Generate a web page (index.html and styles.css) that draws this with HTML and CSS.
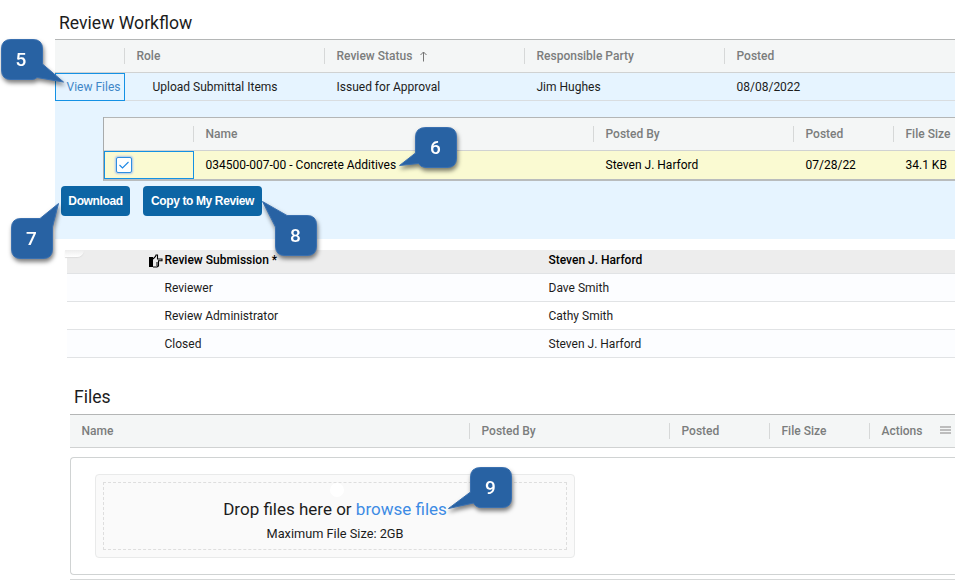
FILE: index.html
```html
<!DOCTYPE html>
<html lang="en">
<head>
<meta charset="UTF-8">
<meta name="viewport" content="width=device-width, initial-scale=1.0">
<title>Review Workflow</title>
<link rel="stylesheet" href="styles.css">
</head>
<body>
<section class="workflow">
  <h2>Review Workflow</h2>
  <div class="grid-header workflow-cols">
    <div></div>
    <div>Role</div>
    <div>Review Status
      <svg class="sort" width="9" height="11" viewBox="0 0 9 11"><path d="M4.5 10.5V1M1.500 4L4.500 1L7.500 4" fill="none" stroke="#757575"/></svg>
    </div>
    <div>Responsible Party</div>
    <div>Posted</div>
  </div>
  <div class="grid-row workflow-cols expanded">
    <div class="focused"><a href="#">View Files</a></div>
    <div class="role">Upload Submittal Items</div>
    <div>Issued for Approval</div>
    <div>Jim Hughes</div>
    <div>08/08/2022</div>
  </div>
  <div class="detail">
    <div class="detail-grid">
      <div class="grid-header detail-cols">
        <div></div>
        <div>Name</div>
        <div>Posted By</div>
        <div>Posted</div>
        <div>File Size</div>
      </div>
      <div class="grid-row detail-cols selected">
        <div class="focused">
          <span class="checkbox"><svg width="12" height="10" viewBox="0 0 12 10"><path d="M1.500 5L4.500 8L10.500 2" fill="none" stroke="#1e88e5" stroke-width="1.1"/></svg></span>
        </div>
        <div>034500-007-00 - Concrete Additives</div>
        <div>Steven J. Harford</div>
        <div>07/28/22</div>
        <div>34.1 KB</div>
      </div>
    </div>
    <div class="buttons">
      <button type="button">Download</button>
      <button type="button">Copy to My Review</button>
    </div>
  </div>
</section>

<section class="steps">
  <div class="step current">
    <div>
      <svg class="hand" width="14" height="14" viewBox="0 0 14 14">
        <path d="M0 3H4V13H0Z" fill="#000"/>
        <path d="M4 5L6.500 2.500L7 1H8.500V5H13V6.800H9.500V12L8 13H4M9.500 9H7M9.300 11H7" fill="none" stroke="#000" stroke-width="1.1"/>
      </svg>Review Submission *
    </div>
    <div>Steven J. Harford</div>
  </div>
  <div class="step"><div>Reviewer</div><div>Dave Smith</div></div>
  <div class="step"><div>Review Administrator</div><div>Cathy Smith</div></div>
  <div class="step"><div>Closed</div><div>Steven J. Harford</div></div>
</section>

<section class="files">
  <h2>Files</h2>
  <div class="grid-header files-cols">
    <div>Name</div>
    <div>Posted By</div>
    <div>Posted</div>
    <div>File Size</div>
    <div>Actions
      <svg class="menu" width="11" height="8" viewBox="0 0 11 8"><path d="M0 1H11M0 4H11M0 7H11" stroke="#aaa" stroke-width="1.4"/></svg>
    </div>
  </div>
  <div class="upload-panel">
    <div class="dropzone">
      <div class="dropzone-inner">
        <span class="dot"></span>
        <p class="drop-text">Drop files here or <a href="#">browse files</a></p>
        <p class="drop-size">Maximum File Size: 2GB</p>
      </div>
    </div>
  </div>
  <div class="files-end"></div>
</section>

<!-- step callouts -->
<svg class="callout callout-5" width="64" height="46" viewBox="0 0 64 46">
  <path d="M10 .5H32Q41.500 .5 41.500 10V25L62.500 43L36 38.500Q34 40.500 31 40.500H10Q.5 40.500 .5 31V10Q.5 .5 10 .5Z"/>
  <text x="20" y="26.500">5</text>
</svg>
<svg class="callout callout-6" width="60" height="42" viewBox="0 0 60 42">
  <path d="M27 .5H48Q57.500 .5 57.500 10V31Q57.500 40.500 48 40.500H27Q22 40.500 19.500 36.500L.5 38.500L16.500 26V10Q16.500 .5 27 .5Z"/>
  <text x="36.500" y="26.500">6</text>
</svg>
<svg class="callout callout-7" width="50" height="58" viewBox="0 0 50 58">
  <path d="M10 15.500H29L47.500 .5L41.500 24V46Q41.500 55.500 32 55.500H10Q.5 55.500 .5 46V25Q.5 15.500 10 15.500Z"/>
  <text x="20.500" y="42">7</text>
</svg>
<svg class="callout callout-8" width="56" height="57" viewBox="0 0 56 57">
  <path d="M.5 .5L25 14.500H45Q54.500 14.500 54.500 24V45Q54.500 54.500 45 54.500H23Q13.500 54.500 13.500 45V26Z"/>
  <text x="33.500" y="41">8</text>
</svg>
<svg class="callout callout-9" width="66" height="44" viewBox="0 0 66 44">
  <path d="M33 .5H54Q63.500 .5 63.500 10V31Q63.500 40.500 54 40.500H33Q28 40.500 25.500 36L.5 41.500L22.500 25V10Q22.500 .5 33 .5Z"/>
  <text x="42.500" y="26.500">9</text>
</svg>
</body>
</html>
```
FILE: styles.css
```css
* {
  box-sizing: border-box;
}

body {
  margin: 0;
  height: 580px;
  overflow: hidden;
  position: relative;
  font-family: Roboto, "Liberation Sans", sans-serif;
  font-size: 12px;
  color: #1c1c1c;
  background: #fff;
}

h2 {
  margin: 0;
  font-size: 17.6px;
  font-weight: 400;
  line-height: 22px;
}

a {
  color: #3f87c8;
  text-decoration: none;
}

/* Grids */
.grid-header,
.grid-row {
  display: grid;
  align-items: center;
}

.grid-header {
  height: 34px;
  border-top: 1px solid #b4b6b6;
  border-bottom: 1px solid #d0d2d2;
  background: #f4f6f6;
  color: #7b7d7d;
  font-weight: 500;
}

.grid-header > div {
  height: 16px;
  line-height: 16px;
  padding-left: 11.5px;
  border-left: 1px solid #d6d8d8;
  white-space: nowrap;
}

.grid-header > div:first-child {
  border-left: none;
}

.grid-row > div {
  padding-left: 12.5px;
  white-space: nowrap;
}

.workflow-cols {
  grid-template-columns: 69px 200px 200px 200px 1fr;
}

.detail-cols {
  grid-template-columns: 89px 400px 200px 100px 1fr;
}

.files-cols {
  grid-template-columns: 399px 200px 100px 100px 1fr;
}

.sort {
  margin-left: 4px;
  vertical-align: -2px;
}

/* Workflow */
.workflow {
  margin-left: 55px;
  padding-top: 12px;
}

.workflow h2 {
  padding: 0 0 5px 4px;
}

.expanded {
  height: 28px;
  background: #e6f4ff;
  border-bottom: 1px solid #d9dde0;
}

.grid-row .focused {
  align-self: stretch;
  display: flex;
  align-items: center;
  border: 1px solid #1491e4;
}

.expanded .focused {
  width: 70px;
  margin-bottom: -1px;
  padding-left: 10.5px;
}

.grid-row .role {
  padding-left: 28.5px;
}

.detail {
  height: 138px;
  padding-top: 16px;
  background: #e6f4ff;
}

.detail-grid {
  margin-left: 48px;
  border-left: 1px solid #a8abac;
  border-bottom: 2px solid #b9bcbd;
}

.selected {
  height: 28px;
  background: #fafad2;
  color: #000;
}

.selected .focused {
  width: 90px;
  padding-left: 11px;
}

.checkbox {
  display: flex;
  align-items: center;
  justify-content: center;
  width: 16px;
  height: 16px;
  border: 1px solid #2f8fe0;
  border-radius: 2px;
  background: #fff;
  box-shadow: 0 0 2px 1px #a9c4ee;
}

.buttons {
  display: flex;
  gap: 13px;
  padding: 5px 0 0 6px;
}

button {
  width: 69px;
  height: 30px;
  padding: 0;
  border: none;
  border-radius: 4px;
  background: #0c65a5;
  color: #fff;
  font: bold 12px "Liberation Sans", Arial, sans-serif;
  letter-spacing: -0.38px;
  white-space: nowrap;
}

button:last-child {
  width: 119px;
}

/* Steps */
.steps {
  margin: 11px 0 0 67px;
}

.step {
  display: grid;
  grid-template-columns: 481.5px 1fr;
  align-items: center;
  height: 28px;
  border-bottom: 1px solid #e1e3e5;
  background: #fcfdff;
}

.step:nth-child(3) {
  background: #fff;
}

.step > div:first-child {
  position: relative;
  padding-left: 97.5px;
}

.current {
  position: relative;
  height: 24px;
  padding-bottom: 3px;
  background: #ededed;
  color: #000;
  font-weight: 500;
}

/* folded corner at the start of the current step */
.current::before {
  content: "";
  position: absolute;
  left: -2px;
  top: 0;
  width: 19px;
  height: 7px;
  border-radius: 0 0 8px 0;
  background: linear-gradient(#ededed, #fff);
  box-shadow: 0 1px 1px #ddd;
}

.hand {
  position: absolute;
  left: 82px;
  top: 1px;
}

/* Files */
.files {
  margin: 28px 0 0 70px;
}

.files h2 {
  padding: 0 0 6px 4px;
}

.menu {
  margin-left: 15px;
  vertical-align: 1px;
}

.upload-panel {
  height: 118px;
  margin-top: 9px;
  padding: 16px 0 0 24px;
  border: 1px solid #d0d3d3;
  border-right: none;
  border-radius: 4px 0 0 4px;
}

.dropzone {
  width: 480px;
  height: 84px;
  padding: 7px;
  border: 1px solid #e9eaea;
  border-radius: 4px;
  background: #fafafa;
}

.dropzone-inner {
  position: relative;
  height: 68px;
  padding-top: 16px;
  border: 1px dashed #dedede;
  text-align: center;
}

.dropzone p {
  margin: 0;
}

.drop-text {
  font-size: 17px;
  line-height: 20px;
}

.drop-text a {
  color: #3d8be4;
}

.drop-size {
  padding-top: 8px;
  font-size: 12.75px;
  line-height: 14px;
}

.dot {
  position: absolute;
  left: 226px;
  top: 0;
  width: 14px;
  height: 14px;
  border-radius: 50%;
  background: #fff;
}

.files-end {
  margin-top: 4px;
  border-top: 1px solid #d6d8d8;
}

/* Callouts */
.callout {
  position: absolute;
  overflow: visible;
  filter: drop-shadow(1px 3px 2px rgba(0, 0, 0, 0.5));
}

.callout path {
  fill: #2862a3;
  stroke: #3a70b0;
}

.callout text {
  fill: #fff;
  font-size: 19px;
  font-weight: 500;
  text-anchor: middle;
}

.callout-5 {
  left: 1px;
  top: 39px;
}

.callout-6 {
  left: 399px;
  top: 127px;
}

.callout-7 {
  left: 11px;
  top: 203px;
}

.callout-8 {
  left: 262px;
  top: 201px;
}

.callout-9 {
  left: 448px;
  top: 467px;
}
```
